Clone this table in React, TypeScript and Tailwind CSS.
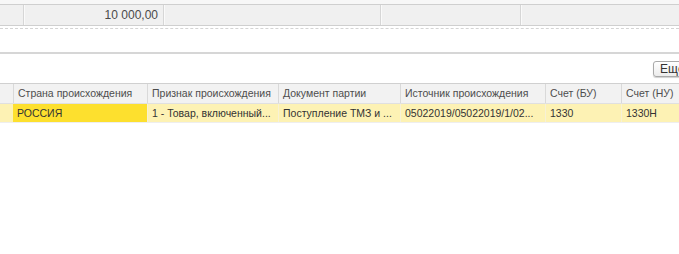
import React from "react";

const font = { fontFamily: '"Liberation Sans", Arial, sans-serif' };

export default function App() {
  const topCells = [
    { w: "w-[23px]", text: "" },
    { w: "w-[140px]", text: "10 000,00" },
    { w: "w-[217px]", text: "" },
    { w: "w-[140px]", text: "" },
    { w: "flex-1", text: "" },
  ];
  const cols = [
    { w: "w-[13px]", h: "", v: "" },
    { w: "w-[134px]", h: "Страна происхождения", v: "РОССИЯ", hi: true },
    { w: "w-[131px]", h: "Признак происхождения", v: "1 - Товар, включенный..." },
    { w: "w-[122px]", h: "Документ партии", v: "Поступление ТМЗ и ..." },
    { w: "w-[145px]", h: "Источник происхождения", v: "05022019/05022019/1/02..." },
    { w: "w-[76px]", h: "Счет (БУ)", v: "1330" },
    { w: "flex-1", h: "Счет (НУ)", v: "1330Н" },
  ];
  return (
    <div className="w-[679px] h-[254px] overflow-hidden bg-white text-[11px]" style={font}>
      <div className="h-[4px] bg-[#f7f7f7]" />
      <div className="flex h-[22px] border-y border-[#cfcfcf] bg-[#f0f0f0]">
        {topCells.map((c, i) => (
          <div
            key={i}
            className={`${c.w} h-full flex items-center justify-end pr-[5px] text-[#4a4a4a] text-[12px] ${i > 0 ? "border-l border-[#d6d6d6] shadow-[inset_1px_0_0_#fafafa]" : ""}`}
          >
            {c.text}
          </div>
        ))}
      </div>
      <div className="h-[2px]" />
      <div className="border-t border-dashed border-[#d4d4d4]" />
      <div className="h-[23px]" />
      <div className="h-[2px] bg-[#d6d6d6]" />
      <div className="h-[29px] flex items-start pt-[7px]">
        <div className="ml-[653px] h-[16px] w-[60px] shrink-0 rounded-[3px] border border-[#a9a9a9] bg-gradient-to-b from-white to-[#ececec] pl-[6px] text-[12px] leading-[14px] text-[#333] shadow-[0_1px_1px_#d0d0d0]">
          Ещё
        </div>
      </div>
      <div className="flex h-[21px] border-t border-[#d0d0d0] bg-[#f2f2f2] border-b border-b-[#e0e0e0]">
        {cols.map((c, i) => (
          <div
            key={i}
            className={`${c.w} h-full flex items-center pl-[4px] pt-[1px] text-[#4d4d4d] text-[10.5px] whitespace-nowrap overflow-hidden ${i > 0 ? "border-l border-[#d9d9d9]" : ""}`}
          >
            {c.h}
          </div>
        ))}
      </div>
      <div className="flex h-[19px] bg-[#fdf2b4] border-b border-[#eeeeee]">
        {cols.map((c, i) => (
          <div
            key={i}
            className={`${c.w} h-full flex items-center pl-[4px] pt-[1px] text-[#333] text-[10.5px] whitespace-nowrap overflow-hidden ${c.hi ? "bg-[#fde02e]" : ""} ${i > 0 && !c.hi ? "border-l border-[#f7f1d6]" : ""}`}
          >
            {c.v}
          </div>
        ))}
      </div>
    </div>
  );
}
